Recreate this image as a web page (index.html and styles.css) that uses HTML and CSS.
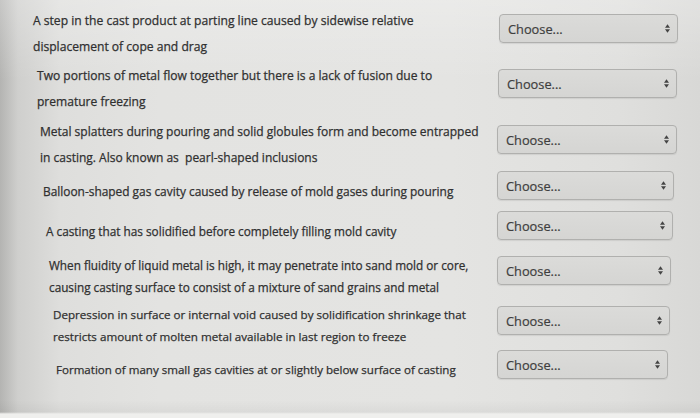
FILE: index.html
```html
<!DOCTYPE html>
<html lang="en">
<head>
<meta charset="utf-8">
<title>Casting defects matching</title>
<link rel="stylesheet" href="styles.css">
</head>
<body>
<main class="quiz">
  <div class="row">
    <p class="q">A step in the cast product at parting line caused by sidewise relative<br>displacement of cope and drag</p>
    <div class="sel"><span>Choose...</span><svg class="arr" viewBox="0 0 6 10"><path d="M3 0L6 4H0Z M3 10L6 6H0Z"/></svg></div>
  </div>
  <div class="row">
    <p class="q">Two portions of metal flow together but there is a lack of fusion due to<br>premature freezing</p>
    <div class="sel"><span>Choose...</span><svg class="arr" viewBox="0 0 6 10"><path d="M3 0L6 4H0Z M3 10L6 6H0Z"/></svg></div>
  </div>
  <div class="row">
    <p class="q">Metal splatters during pouring and solid globules form and become entrapped<br>in casting. Also known as&nbsp; pearl-shaped inclusions</p>
    <div class="sel"><span>Choose...</span><svg class="arr" viewBox="0 0 6 10"><path d="M3 0L6 4H0Z M3 10L6 6H0Z"/></svg></div>
  </div>
  <div class="row">
    <p class="q">Balloon-shaped gas cavity caused by release of mold gases during pouring</p>
    <div class="sel"><span>Choose...</span><svg class="arr" viewBox="0 0 6 10"><path d="M3 0L6 4H0Z M3 10L6 6H0Z"/></svg></div>
  </div>
  <div class="row">
    <p class="q">A casting that has solidified before completely filling mold cavity</p>
    <div class="sel"><span>Choose...</span><svg class="arr" viewBox="0 0 6 10"><path d="M3 0L6 4H0Z M3 10L6 6H0Z"/></svg></div>
  </div>
  <div class="row">
    <p class="q">When fluidity of liquid metal is high, it may penetrate into sand mold or core,<br>causing casting surface to consist of a mixture of sand grains and metal</p>
    <div class="sel"><span>Choose...</span><svg class="arr" viewBox="0 0 6 10"><path d="M3 0L6 4H0Z M3 10L6 6H0Z"/></svg></div>
  </div>
  <div class="row">
    <p class="q">Depression in surface or internal void caused by solidification shrinkage that<br>restricts amount of molten metal available in last region to freeze</p>
    <div class="sel"><span>Choose...</span><svg class="arr" viewBox="0 0 6 10"><path d="M3 0L6 4H0Z M3 10L6 6H0Z"/></svg></div>
  </div>
  <div class="row">
    <p class="q">Formation of many small gas cavities at or slightly below surface of casting</p>
    <div class="sel"><span>Choose...</span><svg class="arr" viewBox="0 0 6 10"><path d="M3 0L6 4H0Z M3 10L6 6H0Z"/></svg></div>
  </div>
</main>
</body>
</html>
```

FILE: styles.css
```css
html, body {
  margin: 0;
  padding: 0;
}
body {
  width: 700px;
  height: 418px;
  overflow: hidden;
  font-family: "Open Sans", "Liberation Sans", sans-serif;
  color: #303030;
  background:
    linear-gradient(180deg, rgba(255,255,255,0.25) 0, rgba(255,255,255,0) 80px, rgba(255,255,255,0) 400px, rgba(0,0,0,0.04) 412px, #efefed 414px),
    linear-gradient(90deg, #b4b4b2 0, #cfcfcd 18px, #dededc 60px, #e3e3e1 160px, #e4e4e2 450px, #dfdfdd 620px, #d8d8d6 700px);
}
.quiz {
  display: flex;
  flex-direction: column;
  padding-top: 8px;
}
.row {
  display: flex;
  align-items: center;
  margin-top: var(--mt, 0);
  padding-left: var(--pl);
  padding-right: var(--pr);
  font-size: var(--fs);
}
.q {
  flex: 1;
  margin: 0;
  line-height: var(--lh, 26px);
  white-space: nowrap;
  -webkit-text-stroke: 0.25px #303030;
}
.sel {
  width: var(--sw);
  height: 29px;
  margin-bottom: 11px;
  box-sizing: border-box;
  display: flex;
  align-items: center;
  justify-content: space-between;
  padding: 0 7px 0 8px;
  background: linear-gradient(180deg, #dbdbd9 0, #d5d5d3 100%);
  border: 1px solid #b0b0ae;
  border-radius: 4px;
  box-shadow: 0 1px 1px rgba(0,0,0,0.08);
  font-size: 12.8px;
  color: #3e3e3e;
  -webkit-text-stroke: 0.2px #3e3e3e;
}
.arr {
  width: 5px;
  height: 9px;
  fill: #444;
}
.row:nth-child(1) { --fs: 12.1px; --pl: 33px; --pr: 22px; --sw: 179px; }
.row:nth-child(2) { --fs: 12.05px; --mt: 3px; --pl: 37px; --pr: 23px; --sw: 179px; }
.row:nth-child(3) { --fs: 12px; --mt: 4px; --pl: 40px; --pr: 23px; --sw: 180px; }
.row:nth-child(4) { --fs: 11.9px; --pl: 43px; --pr: 26px; --sw: 177px; }
.row:nth-child(5) { --fs: 11.8px; --pl: 46px; --pr: 27px; --sw: 176px; }
.row:nth-child(6) { --fs: 11.75px; --mt: 3px; --lh: 22px; --pl: 49px; --pr: 29px; --sw: 174px; }
.row:nth-child(7) { --fs: 11.63px; --mt: 6px; --lh: 22px; --pl: 53px; --pr: 30px; --sw: 173px; }
.row:nth-child(8) { --fs: 11.57px; --mt: 2px; --pl: 56px; --pr: 32px; --sw: 171px; }
```
